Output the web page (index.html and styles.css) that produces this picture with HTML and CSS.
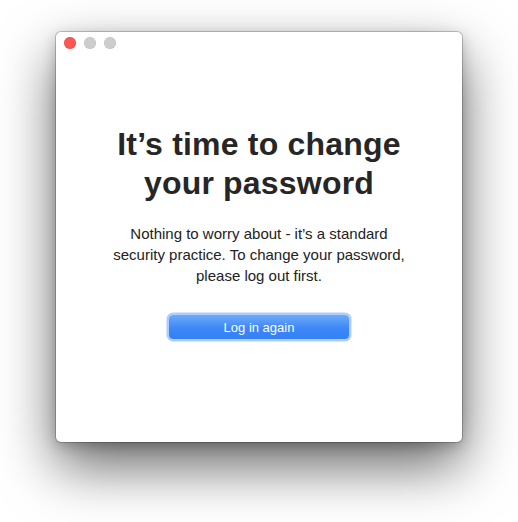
FILE: index.html
```html
<!DOCTYPE html>
<html>
<head>
<meta charset="utf-8">
<link rel="stylesheet" href="styles.css">
</head>
<body>
<div class="stage">
  <div class="window">
    <div class="titlebar">
      <span class="light close"></span>
      <span class="light"></span>
      <span class="light"></span>
    </div>
    <div class="content">
      <h1 class="title">It’s time to change<br>your password</h1>
      <p class="desc">Nothing to worry about - it’s a standard<br>security practice. To change your password,<br>please log out first.</p>
      <button class="btn">Log in again</button>
    </div>
  </div>
</div>
</body>
</html>
```
FILE: styles.css
```css
html, body {
  margin: 0;
  padding: 0;
  background: #ffffff;
}
body {
  font-family: "Liberation Sans", Arial, sans-serif;
  width: 518px;
  height: 522px;
  overflow: hidden;
}
.stage {
  padding: 32px 0 0 56px;
}
.window {
  width: 406px;
  height: 410px;
  background: #ffffff;
  border-radius: 5px;
  box-shadow: 0 0 0 1px rgba(0,0,0,0.2), 0 24px 56px rgba(0,0,0,0.6), 0 4px 14px rgba(0,0,0,0.22);
  display: flex;
  flex-direction: column;
}
.titlebar {
  display: flex;
  gap: 8px;
  padding: 5px 0 0 8px;
  height: 17px;
}
.light {
  width: 12px;
  height: 12px;
  border-radius: 50%;
  background: #cdcdcd;
  box-shadow: inset 0 0 0 0.5px rgba(0,0,0,0.1);
}
.light.close {
  background: #fc5753;
  box-shadow: inset 0 0 0 0.5px rgba(200,40,40,0.4);
}
.content {
  display: flex;
  flex-direction: column;
  align-items: center;
  text-align: center;
  padding-top: 71px;
}
.title {
  margin: 0;
  font-size: 32px;
  line-height: 39px;
  font-weight: bold;
  color: #262626;
  letter-spacing: 0.2px;
}
.desc {
  margin: 20px 0 0;
  font-size: 15px;
  line-height: 21px;
  color: #222222;
}
.btn {
  margin-top: 29px;
  width: 180px;
  height: 24px;
  border: none;
  border-radius: 4px;
  background: linear-gradient(#6eaafa, #3d87f7 55%, #3480f6);
  box-shadow: 0 0 0 2.5px rgba(110,165,245,0.55);
  color: #ffffff;
  font-family: "Liberation Sans", Arial, sans-serif;
  font-size: 13px;
  padding: 0;
}
```
